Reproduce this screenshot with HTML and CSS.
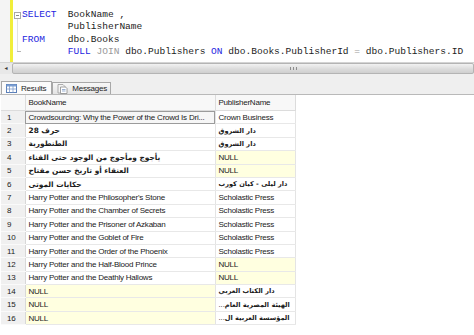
FILE: index.html
```html
<!DOCTYPE html>
<html lang="en">
<head>
    <meta charset="UTF-8">
    <title>Query - Books</title>
    <link rel="stylesheet" href="styles.css">
</head>
<body>
    <div class="editor">
        <div class="gutter"></div>
        <div class="change-bar"></div>
        <div class="outline">
            <span class="fold-box"></span>
            <span class="fold-line"></span>
            <span class="fold-end"></span>
        </div>
        <div class="code">
            <div class="line"><span class="kw">SELECT</span>  BookName ,</div>
            <div class="line">        PublisherName</div>
            <div class="line"><span class="kw">FROM</span>    dbo.Books</div>
            <div class="line">        <span class="kw">FULL</span> <span class="op">JOIN</span> dbo.Publishers <span class="kw">ON</span> dbo.Books.PublisherId <span class="op">=</span> dbo.Publishers.ID</div>
        </div>
    </div>

    <div class="hscroll">
        <span class="arrow">&#9666;</span>
        <div class="thumb"><span class="grip"></span></div>
    </div>

    <div class="tab-strip">
        <div class="tab active">
            <svg class="tab-icon" width="11" height="9" viewBox="0 0 11 9">
                <rect x="0.5" y="0.5" width="10" height="8" fill="#fff" stroke="#5a7fb8"/>
                <rect x="0.5" y="0.5" width="10" height="2" fill="#7b9fd4"/>
                <path d="M0.5 5h10M3.5 0.5v8M7 0.5v8" stroke="#7d9ccc" stroke-width="0.8" fill="none"/>
            </svg>
            <span>Results</span>
        </div>
        <div class="tab">
            <svg class="tab-icon" width="11" height="11" viewBox="0 0 11 11">
                <path d="M1 1.5h5l2 2v6.5h-7z" fill="#f4f4f4" stroke="#9a9a9a" stroke-width="0.8"/>
                <path d="M3.5 4h5l1.5 1.5v5h-6.5z" fill="#fff" stroke="#8a8a8a" stroke-width="0.8"/>
                <path d="M5 6.5h3.5M5 8h3.5" stroke="#6f8fc2" stroke-width="0.7"/>
            </svg>
            <span>Messages</span>
        </div>
    </div>

    <div class="results">
        <table class="grid">
            <colgroup>
                <col class="c-num">
                <col class="c-book">
                <col class="c-pub">
            </colgroup>
            <thead>
                <tr><th></th><th>BookName</th><th>PublisherName</th></tr>
            </thead>
            <tbody>
                <tr><td class="num">1</td><td class="focus">Crowdsourcing: Why the Power of the Crowd Is Dri...</td><td>Crown Business</td></tr>
                <tr><td class="num">2</td><td class="ar"><bdi>حرف 28</bdi></td><td class="ar pub"><bdi>دار الشروق</bdi></td></tr>
                <tr><td class="num">3</td><td class="ar"><bdi>الطنطورية</bdi></td><td class="ar pub"><bdi>دار الشروق</bdi></td></tr>
                <tr><td class="num">4</td><td class="ar"><bdi>يأجوج ومأجوج من الوجود حتى الفناء</bdi></td><td class="null">NULL</td></tr>
                <tr><td class="num">5</td><td class="ar"><bdi>العنقاء أو تاريخ حسن مفتاح</bdi></td><td class="null">NULL</td></tr>
                <tr><td class="num">6</td><td class="ar"><bdi>حكايات الموتى</bdi></td><td class="ar pub"><bdi>دار ليلى - كيان كورب</bdi></td></tr>
                <tr><td class="num">7</td><td>Harry Potter and the Philosopher's Stone</td><td>Scholastic Press</td></tr>
                <tr><td class="num">8</td><td>Harry Potter and the Chamber of Secrets</td><td>Scholastic Press</td></tr>
                <tr><td class="num">9</td><td>Harry Potter and the Prisoner of Azkaban</td><td>Scholastic Press</td></tr>
                <tr><td class="num">10</td><td>Harry Potter and the Goblet of Fire</td><td>Scholastic Press</td></tr>
                <tr><td class="num">11</td><td>Harry Potter and the Order of the Phoenix</td><td>Scholastic Press</td></tr>
                <tr><td class="num">12</td><td>Harry Potter and the Half-Blood Prince</td><td class="null">NULL</td></tr>
                <tr><td class="num">13</td><td>Harry Potter and the Deathly Hallows</td><td class="null">NULL</td></tr>
                <tr><td class="num">14</td><td class="null">NULL</td><td class="ar pub"><bdi>دار الكتاب العربي</bdi></td></tr>
                <tr><td class="num">15</td><td class="null">NULL</td><td class="ar pub"><span class="dots">...</span><bdi>الهيئة المصرية العام</bdi></td></tr>
                <tr><td class="num">16</td><td class="null">NULL</td><td class="ar pub"><span class="dots">...</span><bdi>المؤسسة العربية ال</bdi></td></tr>
            </tbody>
        </table>
    </div>
</body>
</html>
```

FILE: styles.css
```css
body {
    margin: 0;
    width: 474px;
    height: 335px;
    overflow: hidden;
    background-color: #ffffff;
    font-family: "Liberation Sans", Arial, "DejaVu Sans", sans-serif;
}

/* query editor */
.editor {
    display: flex;
    height: 62px;
    background-color: #ffffff;
}
.gutter {
    width: 10px;
    background-color: #f4f4f4;
}
.change-bar {
    width: 3px;
    background-color: #f1ee3a;
}
.outline {
    width: 8px;
    display: flex;
    flex-direction: column;
    align-items: center;
    padding-top: 12px;
}
.fold-box {
    width: 5px;
    height: 5px;
    border: 1px solid #a8a8a8;
    background: linear-gradient(#8a8a8a, #8a8a8a) center / 3px 1px no-repeat #ffffff;
}
.fold-line {
    width: 1px;
    height: 32px;
    background-color: #e2e2e2;
}
.fold-end {
    width: 4px;
    height: 1px;
    margin-left: 3px;
    background-color: #b5b5b5;
}
.code {
    padding: 9px 0 0 1px;
    font-family: "Liberation Mono", "Courier New", monospace;
    font-size: 9.55px;
    color: #1c1c1c;
}
.code .line {
    height: 12.3px;
    line-height: 12.3px;
    white-space: pre;
}
.code .kw {
    color: #2424e0;
}
.code .op {
    color: #9a9a9a;
}

/* horizontal scroll bar */
.hscroll {
    display: flex;
    align-items: stretch;
    height: 11px;
    background-color: #e8e8e8;
    border-top: 1px solid #d4d4d4;
}
.hscroll .arrow {
    width: 12px;
    font-size: 6px;
    line-height: 11px;
    text-align: center;
    color: #3a3a3a;
}
.hscroll .thumb {
    flex: 1;
    display: flex;
    justify-content: center;
    align-items: center;
    padding-left: 100px;
    border: 1px solid #b4b4b4;
    border-radius: 2px;
    background: linear-gradient(#f2f2f2, #dcdcdc 55%, #cfcfcf);
}
.hscroll .grip {
    width: 5px;
    height: 3px;
    border-left: 1px solid #8d8d8d;
    border-right: 1px solid #8d8d8d;
    background: linear-gradient(#8d8d8d, #8d8d8d) center / 1px 3px no-repeat;
}

/* result tabs */
.tab-strip {
    display: flex;
    align-items: flex-end;
    height: 20px;
    padding-left: 1px;
    background-color: #efefef;
    border-bottom: 1px solid #b9b9b9;
}
.tab {
    display: flex;
    align-items: center;
    gap: 4px;
    height: 11px;
    padding: 0 3px 0 4px;
    font-size: 8px;
    letter-spacing: -0.2px;
    color: #1e1e1e;
    background: linear-gradient(#f7f7f7, #e4e4e4);
    border: 1px solid #a8a8a8;
    border-bottom: none;
}
.tab.active {
    height: 12px;
    padding-right: 5px;
    background: #fbfbfb;
}
.tab-icon {
    flex: none;
}

/* result grid */
.results {
    padding-left: 1px;
}
.grid {
    border-collapse: collapse;
    table-layout: fixed;
    width: 294px;
    font-size: 8px;
    letter-spacing: -0.22px;
    color: #1a1a1a;
}
.c-num {
    width: 24px;
}
.c-book {
    width: 190px;
}
.c-pub {
    width: 80px;
}
.grid th {
    height: 15px;
    padding: 0 0 0 3px;
    font-weight: normal;
    text-align: left;
    background-color: #f8f8f8;
    border-right: 1px solid #dcdcdc;
    border-bottom: 1px solid #dcdcdc;
}
.grid td {
    height: 12.4px;
    padding: 0 0 0 3px;
    white-space: nowrap;
    overflow: hidden;
    border-right: 1px solid #e4e4e4;
    border-bottom: 1px solid #e8e8e8;
}
.grid td.num {
    padding-left: 6px;
    background-color: #f0f0f0;
    border-bottom: 1px solid #fafafa;
    border-right: 1px solid #d8d8d8;
}
.grid td.null {
    background-color: #ffffe0;
}
.grid td.focus {
    background-color: #f6f6f6;
    outline: 1px solid #9b9b9b;
    outline-offset: -1px;
}
.grid td.ar {
    font-family: "DejaVu Sans", sans-serif;
    font-size: 7.4px;
    font-weight: bold;
    letter-spacing: 0;
}
.grid td.ar.pub {
    font-size: 6.6px;
}
.grid td.ar .dots {
    font-weight: normal;
}
```
